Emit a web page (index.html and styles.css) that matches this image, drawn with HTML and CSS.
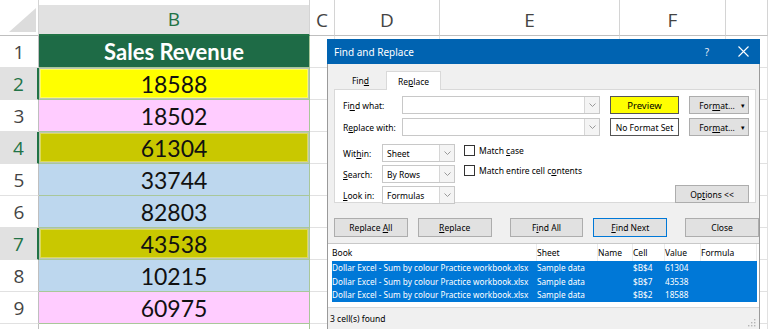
FILE: index.html
```html
<!DOCTYPE html>
<html>
<head>
<meta charset="utf-8">
<link rel="stylesheet" href="styles.css">
</head>
<body>
<div class="sheet">
  <div class="row hdr">
    <div class="corner"><span class="tri"></span></div>
    <div class="colh sel">B</div>
    <div class="colh">C</div>
    <div class="colh">D</div>
    <div class="colh">E</div>
    <div class="colh">F</div>
    <div class="colh"></div>
  </div>
  <div class="row">
    <div class="rowh">1</div>
    <div class="cell title">Sales Revenue</div>
    <div class="cell e"></div><div class="cell e"></div><div class="cell e"></div><div class="cell e"></div><div class="cell e"></div>
  </div>
  <div class="row">
    <div class="rowh sel">2</div>
    <div class="cell yellow picked">18588</div>
    <div class="cell e"></div><div class="cell e"></div><div class="cell e"></div><div class="cell e"></div><div class="cell e"></div>
  </div>
  <div class="row">
    <div class="rowh">3</div>
    <div class="cell pink">18502</div>
    <div class="cell e"></div><div class="cell e"></div><div class="cell e"></div><div class="cell e"></div><div class="cell e"></div>
  </div>
  <div class="row">
    <div class="rowh sel">4</div>
    <div class="cell olive picked">61304</div>
    <div class="cell e"></div><div class="cell e"></div><div class="cell e"></div><div class="cell e"></div><div class="cell e"></div>
  </div>
  <div class="row">
    <div class="rowh">5</div>
    <div class="cell blue">33744</div>
    <div class="cell e"></div><div class="cell e"></div><div class="cell e"></div><div class="cell e"></div><div class="cell e"></div>
  </div>
  <div class="row">
    <div class="rowh">6</div>
    <div class="cell blue">82803</div>
    <div class="cell e"></div><div class="cell e"></div><div class="cell e"></div><div class="cell e"></div><div class="cell e"></div>
  </div>
  <div class="row">
    <div class="rowh sel">7</div>
    <div class="cell olive picked">43538</div>
    <div class="cell e"></div><div class="cell e"></div><div class="cell e"></div><div class="cell e"></div><div class="cell e"></div>
  </div>
  <div class="row">
    <div class="rowh">8</div>
    <div class="cell blue">10215</div>
    <div class="cell e"></div><div class="cell e"></div><div class="cell e"></div><div class="cell e"></div><div class="cell e"></div>
  </div>
  <div class="row">
    <div class="rowh">9</div>
    <div class="cell pink">60975</div>
    <div class="cell e"></div><div class="cell e"></div><div class="cell e"></div><div class="cell e"></div><div class="cell e"></div>
  </div>
  <div class="row">
    <div class="rowh"></div>
    <div class="cell"></div>
    <div class="cell e"></div><div class="cell e"></div><div class="cell e"></div><div class="cell e"></div><div class="cell e"></div>
  </div>
</div>

<div class="dlg">
  <div class="titlebar">
    <span class="ttl">Find and Replace</span>
    <span class="tbtn q">?</span>
    <span class="tbtn x">
      <svg width="11" height="11" viewBox="0 0 11 11"><path d="M0.5 0.5 L10.5 10.5 M10.5 0.5 L0.5 10.5" stroke="#fff" stroke-width="1.1" fill="none"/></svg>
    </span>
  </div>
  <div class="tabs">
    <div class="tab"><span>Fin<u>d</u></span></div>
    <div class="tab active"><span>Re<u>p</u>lace</span></div>
  </div>
  <div class="panel">
    <div class="frow">
      <label class="lbl">Fi<u>n</u>d what:</label>
      <div class="combo wide"><span class="val"></span><span class="drop"><svg width="7" height="4" viewBox="0 0 7 4"><path d="M0.5 0.5 L3.5 3.5 L6.5 0.5" stroke="#999" fill="none"/></svg></span></div>
      <div class="fmtbox preview">Preview</div>
      <div class="btn fmt"><span>For<u>m</u>at...</span><span class="caret">▾</span></div>
    </div>
    <div class="frow">
      <label class="lbl">R<u>e</u>place with:</label>
      <div class="combo wide"><span class="val"></span><span class="drop"><svg width="7" height="4" viewBox="0 0 7 4"><path d="M0.5 0.5 L3.5 3.5 L6.5 0.5" stroke="#999" fill="none"/></svg></span></div>
      <div class="fmtbox nofmt">No Format Set</div>
      <div class="btn fmt"><span>For<u>m</u>at...</span><span class="caret">▾</span></div>
    </div>
    <div class="opts">
      <div class="selects">
        <div class="srow">
          <label class="lbl2">Wit<u>h</u>in:</label>
          <div class="combo sm"><span class="val">Sheet</span><span class="drop"><svg width="7" height="4" viewBox="0 0 7 4"><path d="M0.5 0.5 L3.5 3.5 L6.5 0.5" stroke="#999" fill="none"/></svg></span></div>
        </div>
        <div class="srow">
          <label class="lbl2"><u>S</u>earch:</label>
          <div class="combo sm"><span class="val">By Rows</span><span class="drop"><svg width="7" height="4" viewBox="0 0 7 4"><path d="M0.5 0.5 L3.5 3.5 L6.5 0.5" stroke="#999" fill="none"/></svg></span></div>
        </div>
        <div class="srow">
          <label class="lbl2"><u>L</u>ook in:</label>
          <div class="combo sm"><span class="val">Formulas</span><span class="drop"><svg width="7" height="4" viewBox="0 0 7 4"><path d="M0.5 0.5 L3.5 3.5 L6.5 0.5" stroke="#999" fill="none"/></svg></span></div>
        </div>
      </div>
      <div class="checks">
        <div class="chk"><span class="box"></span><span>Match <u>c</u>ase</span></div>
        <div class="chk"><span class="box"></span><span>Match entire cell c<u>o</u>ntents</span></div>
      </div>
      <div class="optcol">
        <div class="btn options"><span>Op<u>t</u>ions &lt;&lt;</span></div>
      </div>
    </div>
  </div>
  <div class="actions">
    <div class="btn act"><span>Replace <u>A</u>ll</span></div>
    <div class="btn act"><span><u>R</u>eplace</span></div>
    <div class="btn act gap"><span>F<u>i</u>nd All</span></div>
    <div class="btn act focus"><span><u>F</u>ind Next</span></div>
    <div class="btn act gap"><span>Close</span></div>
  </div>
  <div class="results">
    <div class="rhead">
      <span class="c book">Book</span>
      <span class="c sheetc">Sheet</span>
      <span class="c name">Name</span>
      <span class="c cellc">Cell</span>
      <span class="c value">Value</span>
      <span class="c formula">Formula</span>
    </div>
    <div class="rrow">
      <span class="c book">Dollar Excel - Sum by colour Practice workbook.xlsx</span>
      <span class="c sheetc">Sample data</span>
      <span class="c name"></span>
      <span class="c cellc">$B$4</span>
      <span class="c value">61304</span>
      <span class="c formula"></span>
    </div>
    <div class="rrow">
      <span class="c book">Dollar Excel - Sum by colour Practice workbook.xlsx</span>
      <span class="c sheetc">Sample data</span>
      <span class="c name"></span>
      <span class="c cellc">$B$7</span>
      <span class="c value">43538</span>
      <span class="c formula"></span>
    </div>
    <div class="rrow">
      <span class="c book">Dollar Excel - Sum by colour Practice workbook.xlsx</span>
      <span class="c sheetc">Sample data</span>
      <span class="c name"></span>
      <span class="c cellc">$B$2</span>
      <span class="c value">18588</span>
      <span class="c formula"></span>
    </div>
  </div>
  <div class="status">
    <span class="stxt">3 cell(s) found</span>
    <svg class="grip" width="8" height="8" viewBox="0 0 8 8">
      <rect x="6" y="0" width="1.4" height="1.4" fill="#b5b5b5"/>
      <rect x="3" y="3" width="1.4" height="1.4" fill="#b5b5b5"/>
      <rect x="6" y="3" width="1.4" height="1.4" fill="#b5b5b5"/>
      <rect x="0" y="6" width="1.4" height="1.4" fill="#b5b5b5"/>
      <rect x="3" y="6" width="1.4" height="1.4" fill="#b5b5b5"/>
      <rect x="6" y="6" width="1.4" height="1.4" fill="#b5b5b5"/>
    </svg>
  </div>
</div>
</body>
</html>
```

FILE: styles.css
```css
html, body {
  margin: 0;
  padding: 0;
  background: #fff;
  overflow: hidden;
}
body {
  width: 768px;
  height: 329px;
  position: relative;
  font-family: "Lato", "Liberation Sans", sans-serif;
}

/* ---------- sheet ---------- */
.sheet {
  display: flex;
  flex-direction: column;
  height: 329px;
  overflow: hidden;
}
.row {
  display: grid;
  grid-template-columns: 39px 271px 25px 105px 180px 106px 42px;
  height: 32px;
  flex: none;
}
.row.hdr {
  height: 36px;
}
.corner {
  border-right: 1px solid #d4d4d4;
  border-bottom: 1px solid #bfbfbf;
  display: flex;
  align-items: flex-end;
  justify-content: flex-end;
  padding: 0 2px 3px 0;
}
.tri {
  width: 27px;
  height: 24px;
  background: #dcdcdc;
  clip-path: polygon(100% 0, 100% 100%, 0 100%);
}
.colh {
  border-right: 1px solid #d4d4d4;
  border-bottom: 1px solid #bfbfbf;
  display: flex;
  align-items: center;
  justify-content: center;
  font-family: "Open Sans", "Liberation Sans", sans-serif;
  font-size: 19px;
  color: #444;
  padding-top: 4px;
}
.colh.sel {
  background: linear-gradient(#fff 5px, #e1e1e1 5px);
  color: #217346;
  border-bottom: 2px solid #217346;
}
.rowh {
  display: flex;
  align-items: center;
  justify-content: center;
  font-family: "Open Sans", "Liberation Sans", sans-serif;
  font-size: 19px;
  color: #444;
  border-bottom: 1px solid #e1e1e1;
  border-right: 1px solid #bfbfbf;
}
.rowh.sel {
  background: #e1e1e1;
  color: #217346;
  border-right: 2px solid #217346;
}
.cell {
  display: flex;
  align-items: center;
  justify-content: center;
  border-right: 1px solid #a9c79a;
  border-bottom: 1px solid #a9c79a;
  font-size: 23px;
  color: #111;
}
.cell.e {
  border-right: 1px solid #e1e1e1;
  border-bottom: 1px solid #e1e1e1;
}
.cell.title {
  background: #1e6b46;
  color: #fff;
  font-weight: 700;
  font-size: 22px;
}
.yellow { background: #ffff00; }
.pink { background: #ffccff; }
.olive { background: #c9c800; }
.blue { background: #bdd7ee; }
.picked {
  box-shadow: inset 0 0 0 2px rgba(255, 255, 255, 0.35), inset 0 0 0 1px #9aa98a;
}

/* ---------- dialog ---------- */
.dlg {
  position: absolute;
  left: 327px;
  top: 39px;
  width: 433px;
  height: 300px;
  background: #f0f0f0;
  border: 1px solid #9a9a9a;
  border-top: none;
  box-sizing: border-box;
  display: flex;
  flex-direction: column;
  font-family: "Noto Sans", "Open Sans", sans-serif;
  font-size: 8.5px;
  color: #000;
}
.titlebar {
  height: 25px;
  margin: 0 -1px;
  background: #0063b1;
  color: #fff;
  display: flex;
  align-items: center;
  padding-left: 7px;
  font-size: 10px;
  flex: none;
}
.ttl { flex: 1; }
.tbtn {
  width: 38px;
  display: flex;
  justify-content: center;
  align-items: center;
}
.tbtn.q { font-size: 10px; color: #e8eef7; }
.tbtn.x { width: 34px; }

.tabs {
  height: 25px;
  display: flex;
  align-items: flex-end;
  padding-left: 7px;
  flex: none;
}
.tab {
  width: 51px;
  height: 17px;
  display: flex;
  align-items: center;
  justify-content: center;
  box-sizing: border-box;
}
.tab.active {
  width: 55px;
  height: 19px;
  background: #fff;
  border: 1px solid #d9d9d9;
  border-bottom: none;
  margin-bottom: -1px;
  position: relative;
}
.panel {
  margin: 0 3px 0 6px;
  height: 114px;
  flex: none;
  box-sizing: border-box;
  background: #fff;
  border: 1px solid #d9d9d9;
  padding: 6px 6px 0 8px;
  display: flex;
  flex-direction: column;
  gap: 4px;
}
.frow {
  display: flex;
  align-items: center;
  height: 18px;
}
.lbl {
  width: 59px;
}
.combo {
  height: 18px;
  box-sizing: border-box;
  border: 1px solid #c8c8c8;
  background: #fff;
  display: flex;
}
.combo .val {
  flex: 1;
  padding-left: 4px;
  display: flex;
  align-items: center;
}
.combo .drop {
  width: 14px;
  border-left: 1px solid #d6d6d6;
  background: #f4f4f4;
  display: flex;
  align-items: center;
  justify-content: center;
}
.combo.wide { width: 198px; }
.combo.sm { width: 73px; }
.fmtbox {
  margin-left: 10px;
  width: 69px;
  height: 18px;
  box-sizing: border-box;
  border: 1px solid #555;
  display: flex;
  align-items: center;
  justify-content: center;
}
.preview {
  background: #ffff00;
  font-size: 9.5px;
}
.nofmt { background: #fff; }
.btn {
  box-sizing: border-box;
  background: #e1e1e1;
  border: 1px solid #adadad;
  display: flex;
  align-items: center;
  justify-content: center;
}
.fmt {
  margin-left: 10px;
  width: 60px;
  height: 18px;
  padding-left: 6px;
}
.caret {
  font-size: 7px;
  margin-left: 6px;
}
.opts {
  display: flex;
  margin-top: 4px;
}
.selects {
  display: flex;
  flex-direction: column;
  gap: 3px;
}
.srow {
  display: flex;
  align-items: center;
  height: 18px;
}
.lbl2 { width: 39px; }
.checks {
  margin-left: 9px;
  display: flex;
  flex-direction: column;
  gap: 9px;
  padding-top: 1px;
}
.chk {
  display: flex;
  align-items: center;
  height: 11px;
}
.box {
  width: 11px;
  height: 11px;
  box-sizing: border-box;
  border: 1px solid #333;
  background: #fff;
  margin-right: 4px;
}
.optcol {
  flex: 1;
  display: flex;
  justify-content: flex-end;
  align-items: flex-end;
  padding-bottom: 1px;
}
.options {
  width: 74px;
  height: 18px;
}
.actions {
  display: flex;
  padding: 15px 0 0 6px;
  gap: 10px;
  height: 19px;
  flex: none;
}
.act {
  width: 74px;
  height: 19px;
}
.act.gap { margin-left: 8px; }
.act.focus {
  border: 1px solid #0078d7;
}
.results {
  margin-top: 6px;
  height: 65px;
  flex: none;
  background: #fff;
  border-top: 1px solid #c8c8c8;
  border-bottom: 1px solid #d8d8d8;
  box-sizing: border-box;
  padding: 0 2px 0 4px;
}
.rhead, .rrow {
  display: grid;
  grid-template-columns: 205px 61px 35px 32px 36px 56px;
  height: 13.6px;
  align-items: center;
}
.rhead {
  height: 17px;
}
.rhead .c {
  height: 17px;
  display: flex;
  align-items: center;
  border-right: 1px solid #ececec;
}
.rrow {
  background: #0078d7;
  color: #fff;
  font-size: 8.2px;
}
.rrow .c {
  white-space: nowrap;
  overflow: hidden;
}
.status {
  flex: none;
  height: 22px;
  display: flex;
  align-items: flex-start;
  justify-content: space-between;
  padding: 5px 3px 0 2px;
}
.grip {
  margin-top: 6px;
}
```
